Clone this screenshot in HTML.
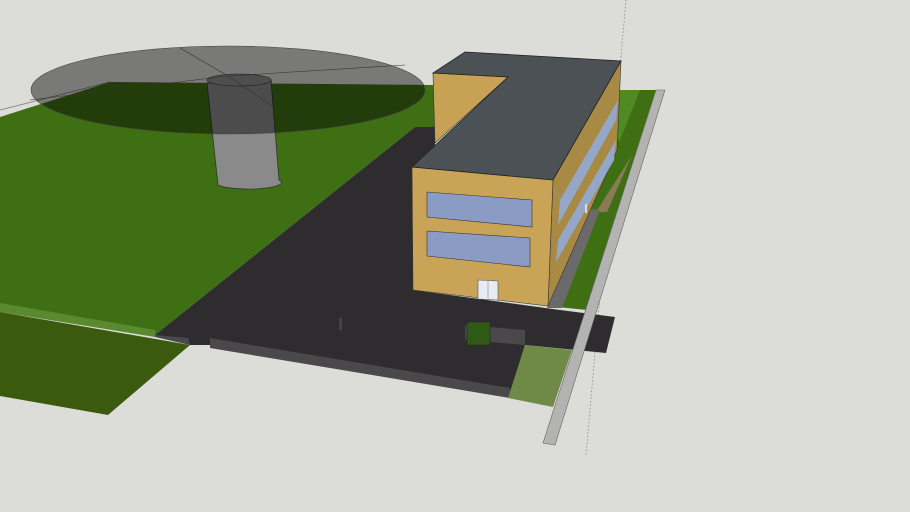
<!DOCTYPE html>
<html><head><meta charset="utf-8"><style>html,body{margin:0;padding:0;background:#dcdcd9;overflow:hidden}svg{display:block}</style></head>
<body>
<svg width="910" height="512" viewBox="0 0 910 512" xmlns="http://www.w3.org/2000/svg">
<rect width="910" height="512" fill="#dcdcd9"/>
<line x1="626" y1="0" x2="586" y2="455" stroke="#888" stroke-width="0.8" stroke-dasharray="1.5,2"/>
<line x1="0" y1="110" x2="110" y2="82" stroke="#777" stroke-width="0.8"/>
<polygon points="0,117 110,82 435,85 435,127 415,127 155,335 0,305" fill="#3e7013"/>
<polygon points="0,303 155,330 155,337 0,312" fill="#5a8a30"/>
<polygon points="0,312 190,345 108,415 0,396" fill="#3b5a0d"/>
<polygon points="415,127 435,127 435,290 413,290 560,310 615,317 606,353 525,345 510,395 210,345 190,345 155,335" fill="#2e2c2e"/>
<polygon points="155,335 188,338 190,345 155,337" fill="#4a484a"/>
<polygon points="210,338 510,388 510,398 210,348" fill="#4a484a"/>
<polygon points="465,325 525,330 525,345 465,340" fill="#4a484a"/>
<polygon points="525,345 572,350 553,407 508,398" fill="#6f8a47"/>
<polygon points="600,90 656,90 587,310 548,306" fill="#3e7013"/>
<polygon points="618,90 640,90 620,140 616,140" fill="#4f8a22"/>
<polygon points="632,155 624,168 596,212 607,212" fill="#8a7a55"/>
<polygon points="656,90 665,90 555,445 543,443" fill="#b3b3b1" stroke="#666" stroke-width="0.6"/>
<polygon points="582,208 600,210 562,308 547,308" fill="#6a6a6a"/>
<polygon points="467,322 490,322 490,345 467,345" fill="#2f5a15" stroke="#222" stroke-width="0.6"/>
<path d="M207,83 L218,185 A30,6 0 0 0 279,180 L271,80 Z" fill="#8a8a8a" stroke="#333" stroke-width="0.8"/>
<ellipse cx="239" cy="80" rx="32" ry="6" fill="#8f8f8f" stroke="#333" stroke-width="0.6"/>
<ellipse cx="228" cy="90" rx="197" ry="44" fill="rgba(0,0,0,0.45)" stroke="#444" stroke-width="0.6"/>
<line x1="180" y1="48" x2="228" y2="76" stroke="#333" stroke-width="0.6"/>
<line x1="228" y1="76" x2="30" y2="100" stroke="#333" stroke-width="0.6"/>
<line x1="228" y1="76" x2="300" y2="125" stroke="#333" stroke-width="0.6"/>
<line x1="228" y1="76" x2="405" y2="65" stroke="#333" stroke-width="0.6"/>
<polygon points="433,73 508,77 435,143" fill="#c7a254" stroke="#333" stroke-width="0.6"/>
<polygon points="553,180 621,61 617,150 548,306" fill="#a88a44" stroke="#333" stroke-width="0.6"/>
<polygon points="560,200 618,100 616,120 558,225" fill="#95a7c8"/>
<polygon points="558,240 616,140 614,160 556,262" fill="#95a7c8"/>
<polygon points="412,167 553,180 548,306 413,290" fill="#c9a457" stroke="#333" stroke-width="0.6"/>
<polygon points="465,52 621,61 553,180 412,167 508,77 433,73" fill="#4b5154" stroke="#222" stroke-width="0.8"/>
<polygon points="427,192 532,200 532,227 427,217" fill="#8a9cc4" stroke="#333" stroke-width="0.6"/>
<polygon points="427,231 530,238 530,267 427,256" fill="#8a9cc4" stroke="#333" stroke-width="0.6"/>
<polygon points="478,280 498,281 498,300 478,299" fill="#e8ecf2" stroke="#555" stroke-width="0.6"/>
<line x1="488" y1="281" x2="488" y2="300" stroke="#888" stroke-width="0.6"/>
<rect x="339" y="318" width="3" height="12" fill="#444"/>
<rect x="585" y="204" width="2" height="9" fill="#ddd"/>
</svg>
</body></html>
